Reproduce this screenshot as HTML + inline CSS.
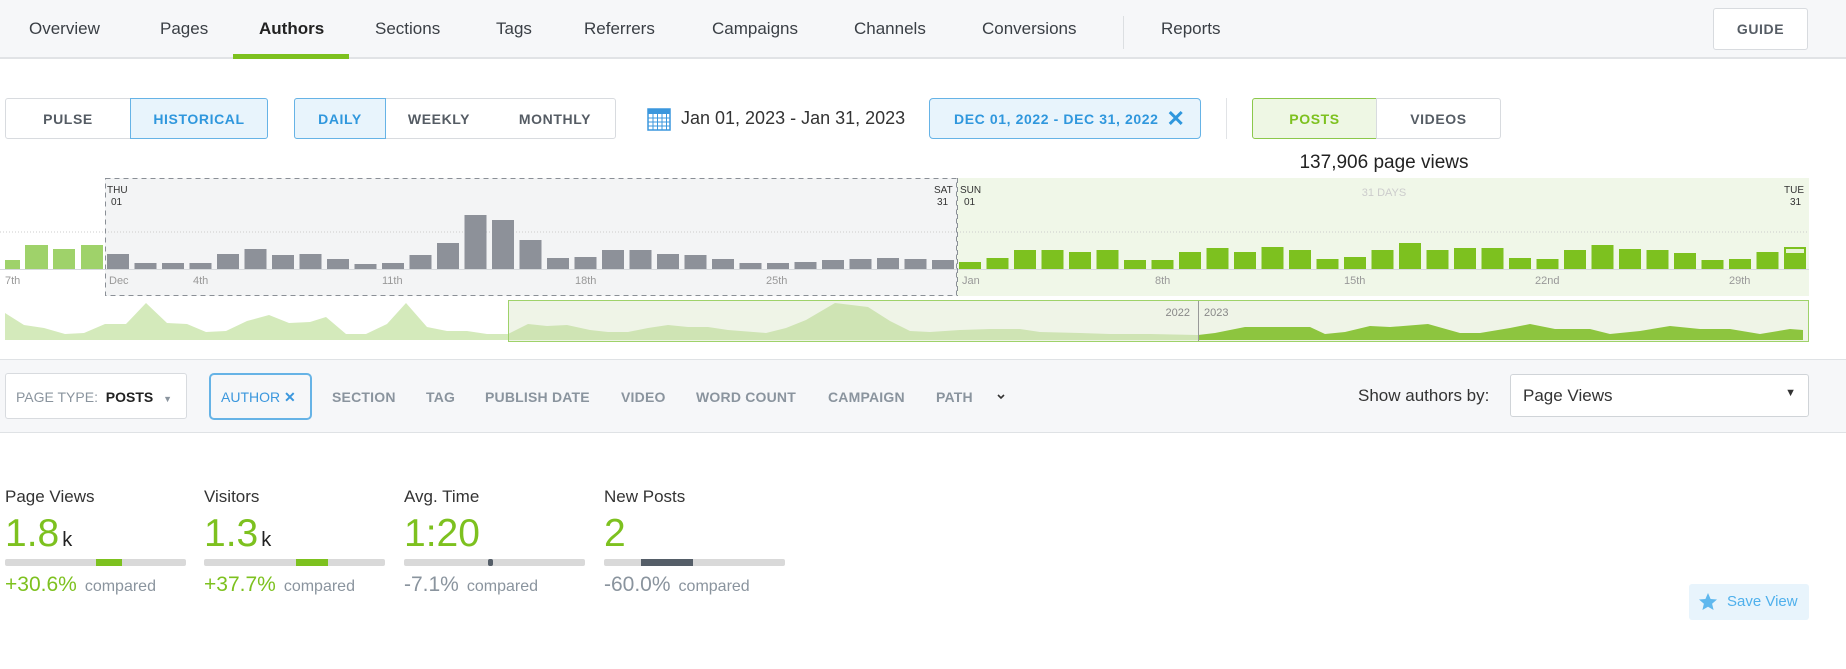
<!DOCTYPE html>
<html><head><meta charset="utf-8"><style>
*{margin:0;padding:0;box-sizing:border-box}
body{width:1846px;height:669px;background:#fff;font-family:"Liberation Sans",sans-serif;position:relative;overflow:hidden;color:#333}
.a{position:absolute;white-space:nowrap}
.nav{position:absolute;left:0;top:0;width:1846px;height:59px;background:#f6f7f9;border-bottom:2px solid #e1e3e6}
.nav .a{top:19px;font-size:17px;color:#3a3f45}
.btn{position:absolute;top:98px;height:41px;border:1px solid #d8dbdf;font-size:14px;letter-spacing:.6px;color:#555c64;display:flex;align-items:center;justify-content:center;font-weight:bold;background:#fff}
.bl{background:#e8f4fc;border-color:#66b3e6;color:#2f97dd}
.flt{position:absolute;top:389px;font-size:14px;color:#8a949e;font-weight:bold;letter-spacing:.2px}
.lab{position:absolute;top:487px;font-size:17px;color:#333}
.val{position:absolute;top:512px;font-size:39px;color:#7dc11f}
.bar{position:absolute;top:559px;height:7px;width:181px;background:#d9d9d9;border-radius:2px}
.cmp{position:absolute;top:573px;font-size:21px}
.cmp small{font-size:16px;color:#8a949e;margin-left:8px}
</style></head><body>
<div class="nav">
<span class="a" style="left:29px">Overview</span>
<span class="a" style="left:160px">Pages</span>
<span class="a" style="left:259px;font-weight:bold;color:#222">Authors</span>
<span class="a" style="left:375px">Sections</span>
<span class="a" style="left:496px">Tags</span>
<span class="a" style="left:584px">Referrers</span>
<span class="a" style="left:712px">Campaigns</span>
<span class="a" style="left:854px">Channels</span>
<span class="a" style="left:982px">Conversions</span>
<div class="a" style="left:1123px;top:16px;width:1px;height:33px;background:#dcdfe2"></div>
<span class="a" style="left:1161px">Reports</span>
<div class="a" style="left:233px;top:54px;width:116px;height:5px;background:#7dc11f"></div>
<div class="a" style="left:1713px;top:8px;width:95px;height:42px;background:#fff;border:1px solid #d8dbdf;border-radius:3px;font-size:14px;font-weight:bold;color:#555c64;letter-spacing:.6px;display:flex;align-items:center;justify-content:center">GUIDE</div>
</div>

<div class="btn" style="left:5px;width:126px;border-radius:3px 0 0 3px">PULSE</div>
<div class="btn bl" style="left:130px;width:138px;border-radius:0 3px 3px 0">HISTORICAL</div>
<div class="btn" style="left:294px;width:322px;border-radius:3px"></div>
<div class="btn bl" style="left:294px;width:92px;border-radius:3px 0 0 3px">DAILY</div>
<div class="btn" style="left:387px;width:104px;border:none;top:99px;height:39px">WEEKLY</div>
<div class="btn" style="left:500px;width:110px;border:none;top:99px;height:39px">MONTHLY</div>
<svg class="a" style="left:647px;top:107px" width="24" height="24" viewBox="0 0 24 24"><rect x="1" y="2" width="22" height="21" fill="#fff" stroke="#3b97dd" stroke-width="1.5"/><rect x="1" y="2" width="22" height="5" fill="#3b97dd"/><g stroke="#3b97dd" stroke-width="1"><path d="M6 7v16M10.5 7v16M15 7v16M19.5 7v16M1 11h22M1 15h22M1 19h22"/></g></svg>
<span class="a" style="left:681px;top:108px;font-size:18px;color:#333">Jan 01, 2023 - Jan 31, 2023</span>
<div class="btn bl" style="left:929px;width:272px;border-radius:4px;justify-content:flex-start;padding-left:24px">DEC 01, 2022 - DEC 31, 2022<span style="font-size:22px;margin-left:8px;font-weight:bold">✕</span></div>
<div class="a" style="left:1226px;top:98px;width:1px;height:41px;background:#e1e3e6"></div>
<div class="btn" style="left:1252px;width:125px;background:#eef7e4;border-color:#8cc84b;color:#7dc11f;border-radius:3px 0 0 3px">POSTS</div>
<div class="btn" style="left:1376px;width:125px;border-radius:0 3px 3px 0">VIDEOS</div>
<span class="a" style="left:1384px;top:152px;transform:translateX(-50%);font-size:19px;color:#222">137,906 page views</span>

<svg class="a" style="left:0;top:170px" width="1846" height="195" viewBox="0 170 1846 195">
<rect x="957" y="178" width="852" height="118" fill="#f0f7e8"/>
<rect x="105" y="178" width="852" height="118" fill="#f3f4f5"/>
<line x1="0" y1="232" x2="1809" y2="232" stroke="#ccc" stroke-dasharray="1,2"/>
<rect x="105.5" y="178.5" width="851" height="117" fill="none" stroke="#8a8f96" stroke-dasharray="5,4"/>
<g fill="#9fd26a"><rect x="5" y="260" width="15" height="9"/><rect x="25" y="245" width="23" height="24"/><rect x="53" y="249" width="22" height="20"/><rect x="81" y="245" width="22" height="24"/></g>
<g fill="#8d9199">
<rect x="107" y="254" width="22" height="15"/><rect x="134.5" y="263" width="22" height="6"/><rect x="162" y="263" width="22" height="6"/><rect x="189.5" y="263" width="22" height="6"/><rect x="217" y="254" width="22" height="15"/><rect x="244.5" y="249" width="22" height="20"/><rect x="272" y="255" width="22" height="14"/><rect x="299.5" y="254" width="22" height="15"/><rect x="327" y="259" width="22" height="10"/><rect x="354.5" y="264" width="22" height="5"/><rect x="382" y="263" width="22" height="6"/><rect x="409.5" y="255" width="22" height="14"/><rect x="437" y="243" width="22" height="26"/><rect x="464.5" y="215" width="22" height="54"/><rect x="492" y="220" width="22" height="49"/><rect x="519.5" y="240" width="22" height="29"/><rect x="547" y="258" width="22" height="11"/><rect x="574.5" y="257" width="22" height="12"/><rect x="602" y="250" width="22" height="19"/><rect x="629.5" y="250" width="22" height="19"/><rect x="657" y="254" width="22" height="15"/><rect x="684.5" y="255" width="22" height="14"/><rect x="712" y="259" width="22" height="10"/><rect x="739.5" y="263" width="22" height="6"/><rect x="767" y="263" width="22" height="6"/><rect x="794.5" y="262" width="22" height="7"/><rect x="822" y="260" width="22" height="9"/><rect x="849.5" y="259" width="22" height="10"/><rect x="877" y="258" width="22" height="11"/><rect x="904.5" y="259" width="22" height="10"/><rect x="932" y="260" width="22" height="9"/>
</g>
<g fill="#7dc11f">
<rect x="959" y="262" width="22" height="7"/><rect x="986.5" y="258" width="22" height="11"/><rect x="1014" y="250" width="22" height="19"/><rect x="1041.5" y="250" width="22" height="19"/><rect x="1069" y="252" width="22" height="17"/><rect x="1096.5" y="250" width="22" height="19"/><rect x="1124" y="260" width="22" height="9"/><rect x="1151.5" y="260" width="22" height="9"/><rect x="1179" y="252" width="22" height="17"/><rect x="1206.5" y="248" width="22" height="21"/><rect x="1234" y="252" width="22" height="17"/><rect x="1261.5" y="247" width="22" height="22"/><rect x="1289" y="250" width="22" height="19"/><rect x="1316.5" y="259" width="22" height="10"/><rect x="1344" y="257" width="22" height="12"/><rect x="1371.5" y="250" width="22" height="19"/><rect x="1399" y="243" width="22" height="26"/><rect x="1426.5" y="250" width="22" height="19"/><rect x="1454" y="248" width="22" height="21"/><rect x="1481.5" y="248" width="22" height="21"/><rect x="1509" y="258" width="22" height="11"/><rect x="1536.5" y="259" width="22" height="10"/><rect x="1564" y="250" width="22" height="19"/><rect x="1591.5" y="245" width="22" height="24"/><rect x="1619" y="249" width="22" height="20"/><rect x="1646.5" y="250" width="22" height="19"/><rect x="1674" y="253" width="22" height="16"/><rect x="1701.5" y="260" width="22" height="9"/><rect x="1729" y="259" width="22" height="10"/><rect x="1756.5" y="252" width="22" height="17"/>
<rect x="1784.5" y="247.5" width="21" height="21" fill="#7dc11f" stroke="#7dc11f"/><rect x="1786" y="249" width="18" height="4" fill="#e6f3d6"/>
</g>
<line x1="0" y1="269.5" x2="1809" y2="269.5" stroke="#d6d9dc"/>
<g font-family="Liberation Sans" font-size="11" fill="#999">
<text x="5" y="284">7th</text><text x="109" y="284">Dec</text><text x="193" y="284">4th</text><text x="382" y="284">11th</text><text x="575" y="284">18th</text><text x="766" y="284">25th</text>
<text x="962" y="284">Jan</text><text x="1155" y="284">8th</text><text x="1344" y="284">15th</text><text x="1535" y="284">22nd</text><text x="1729" y="284">29th</text>
<text x="1384" y="196" text-anchor="middle" fill="#ccc">31 DAYS</text>
</g>
<g font-family="Liberation Sans" font-size="10" fill="#333">
<text x="107" y="193">THU</text><text x="111" y="205">01</text>
<text x="934" y="193">SAT</text><text x="937" y="205">31</text>
<text x="960" y="193">SUN</text><text x="964" y="205">01</text>
<text x="1784" y="193">TUE</text><text x="1790" y="205">31</text>
</g>
<line x1="957.5" y1="178" x2="957.5" y2="296" stroke="#8a8f96" stroke-dasharray="5,4"/>
<polygon fill="#d4eabb" points="5,340 5,313 24,325 44,328 65,334 84,333 105,324 126,324 146,303 167,323 187,324 206,332 226,331 247,321 269,315 289,323 310,322 326,317 346,334 366,334 387,324 406,303 427,327 447,331 467,331 487,334 508,334 528,324 547,326 567,325 590,330 608,332 628,332 648,328 668,325 688,327 708,327 728,330 766,333 786,328 806,320 835,303 868,307 890,321 910,331 930,332 960,330 990,329 1020,329 1040,332 1080,333 1110,334 1150,334 1198,335 1198,340"/>
<polygon fill="#7dc11f" points="1198,340 1198,335 1215,333 1245,327 1270,327 1310,327 1325,334 1345,332 1370,326 1390,327 1428,324 1460,333 1480,333 1510,328 1530,324 1555,329 1590,329 1610,334 1640,331 1670,326 1700,329 1730,329 1760,334 1790,329 1803,330 1803,340"/>
<rect x="508.5" y="300.5" width="1300" height="41" fill="rgba(190,210,160,0.25)" stroke="#9fd26a"/>
<line x1="1198.5" y1="301" x2="1198.5" y2="341" stroke="#999"/>
<text x="1190" y="316" font-family="Liberation Sans" font-size="11" fill="#888" text-anchor="end">2022</text>
<text x="1204" y="316" font-family="Liberation Sans" font-size="11" fill="#888">2023</text>
</svg>

<div class="a" style="left:0;top:359px;width:1846px;height:74px;background:#f6f7f9;border-top:1px solid #dfe2e5;border-bottom:1px solid #dfe2e5"></div>
<div class="a" style="left:5px;top:373px;width:182px;height:46px;background:#fff;border:1px solid #d8dbdf;border-radius:3px;font-size:14px;color:#8a949e;padding:15px 0 0 10px">PAGE TYPE: <b style="color:#222">&nbsp;POSTS</b> <span style="font-size:9px;margin-left:6px">▼</span></div>
<div class="a" style="left:209px;top:373px;width:103px;height:47px;border:2px solid #66b3e6;border-radius:5px;font-size:14px;color:#3b97dd;padding:14px 0 0 10px">AUTHOR <b>✕</b></div>
<span class="flt" style="left:332px">SECTION</span>
<span class="flt" style="left:426px">TAG</span>
<span class="flt" style="left:485px">PUBLISH DATE</span>
<span class="flt" style="left:621px">VIDEO</span>
<span class="flt" style="left:696px">WORD COUNT</span>
<span class="flt" style="left:828px">CAMPAIGN</span>
<span class="flt" style="left:936px">PATH</span>
<svg class="a" style="left:996px;top:392px" width="10" height="10" viewBox="0 0 10 10"><path d="M2 3l3 3 3-3" stroke="#333" stroke-width="1.6" fill="none"/></svg>
<span class="a" style="left:1358px;top:386px;font-size:17px;color:#333">Show authors by:</span>
<div class="a" style="left:1510px;top:374px;width:299px;height:43px;background:#fff;border:1px solid #d0d4d8;border-radius:3px;font-size:17px;color:#333;padding:11px 0 0 12px">Page Views<span style="position:absolute;right:12px;top:12px;font-size:11px">▼</span></div>

<span class="lab" style="left:5px">Page Views</span>
<span class="lab" style="left:204px">Visitors</span>
<span class="lab" style="left:404px">Avg. Time</span>
<span class="lab" style="left:604px">New Posts</span>
<span class="val" style="left:5px">1.8<span style="font-size:20px;color:#222;margin-left:3px">k</span></span>
<span class="val" style="left:204px">1.3<span style="font-size:20px;color:#222;margin-left:3px">k</span></span>
<span class="val" style="left:404px">1:20</span>
<span class="val" style="left:604px">2</span>
<div class="bar" style="left:5px"><div class="a" style="left:91px;width:26px;height:7px;background:#7dc11f"></div></div>
<div class="bar" style="left:204px"><div class="a" style="left:92px;width:32px;height:7px;background:#7dc11f"></div></div>
<div class="bar" style="left:404px"><div class="a" style="left:84px;width:5px;height:7px;background:#555e68;border-radius:2px"></div></div>
<div class="bar" style="left:604px"><div class="a" style="left:37px;width:52px;height:7px;background:#555e68"></div></div>
<span class="cmp" style="left:5px;color:#7dc11f">+30.6%<small>compared</small></span>
<span class="cmp" style="left:204px;color:#7dc11f">+37.7%<small>compared</small></span>
<span class="cmp" style="left:404px;color:#8a949e">-7.1%<small>compared</small></span>
<span class="cmp" style="left:604px;color:#8a949e">-60.0%<small>compared</small></span>

<div class="a" style="left:1689px;top:584px;width:120px;height:36px;background:#e8f4fc;border-radius:3px;font-size:15px;color:#4fb0ec;padding:9px 0 0 38px">Save View</div>
<svg class="a" style="left:1698px;top:592px" width="20" height="20" viewBox="0 0 20 20"><path d="M10 1l2.6 6 6.4.5-4.9 4.2 1.5 6.3L10 14.7 4.4 18l1.5-6.3L1 7.5l6.4-.5z" fill="#5fb8ee"/></svg>
</body></html>
